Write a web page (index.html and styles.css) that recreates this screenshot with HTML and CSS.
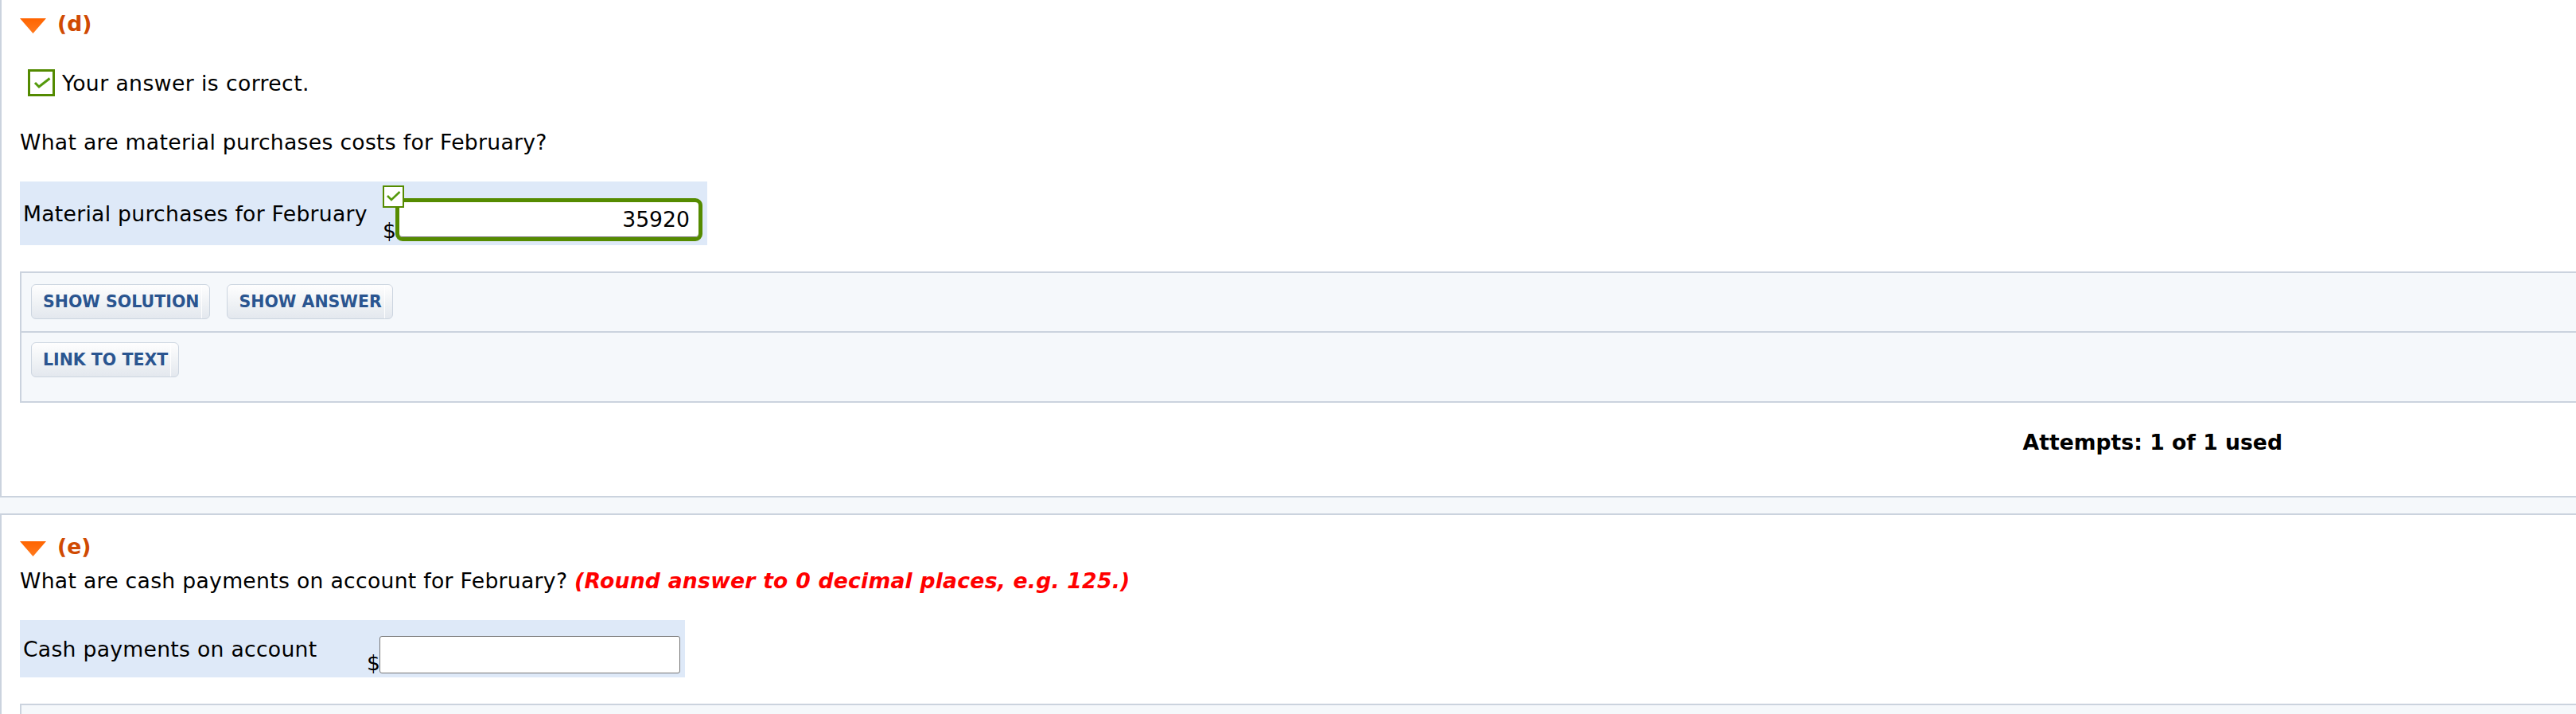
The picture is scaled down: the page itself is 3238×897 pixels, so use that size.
FILE: index.html
```html
<!DOCTYPE html>
<html lang="en">
<head>
<meta charset="utf-8">
<title>Question parts</title>
<link rel="stylesheet" href="styles.css">
</head>
<body>
<section class="part part-first">
  <div class="part-head">
    <svg class="caret" width="33" height="19" viewBox="0 0 33 19"><defs><linearGradient id="cg1" x1="0" y1="0" x2="0" y2="1"><stop offset="0" stop-color="#ff6400"/><stop offset="1" stop-color="#ff7a1e"/></linearGradient></defs><polygon points="0,0 33,0 16.5,19" fill="url(#cg1)"/></svg>
    <span class="part-label">(d)</span>
  </div>
  <div class="status">
    <span class="check-big"><svg width="28" height="28" viewBox="0 0 28 28"><path d="M6 14 L11 19 L24.5 8.5" fill="none" stroke="#559a0c" stroke-width="3"/></svg></span>
    <span>Your answer is correct.</span>
  </div>
  <p class="question">What are material purchases costs for February?</p>
  <div class="answer-box">
    <div class="answer-label label-d">Material purchases for February</div>
    <div class="answer-cell cell-d">
      <span class="check-small"><svg width="23" height="24" viewBox="0 0 23 24"><path d="M4 11 L9 16 L19.5 6" fill="none" stroke="#559a0c" stroke-width="2.6"/></svg></span>
      <span class="currency">$</span>
      <div class="field field-correct">35920</div>
    </div>
  </div>
  <div class="tools">
    <div class="tool-row">
      <button class="btn">SHOW SOLUTION</button>
      <button class="btn">SHOW ANSWER</button>
    </div>
    <div class="tool-row">
      <button class="btn">LINK TO TEXT</button>
    </div>
  </div>
  <div class="attempts">Attempts: 1 of 1 used</div>
</section>
<section class="part part-second">
  <div class="part-head">
    <svg class="caret" width="33" height="19" viewBox="0 0 33 19"><defs><linearGradient id="cg2" x1="0" y1="0" x2="0" y2="1"><stop offset="0" stop-color="#ff6400"/><stop offset="1" stop-color="#ff7a1e"/></linearGradient></defs><polygon points="0,0 33,0 16.5,19" fill="url(#cg2)"/></svg>
    <span class="part-label">(e)</span>
  </div>
  <p class="question question-e">What are cash payments on account for February? <span class="hint">(Round answer to 0 decimal places, e.g. 125.)</span></p>
  <div class="answer-box">
    <div class="answer-label label-e">Cash payments on account</div>
    <div class="answer-cell cell-e">
      <span class="currency">$</span>
      <div class="field field-empty"></div>
    </div>
  </div>
  <div class="tools tools-empty"></div>
</section>
</body>
</html>
```
FILE: styles.css
```css
* { box-sizing: border-box; }

html, body {
  overflow: hidden;
}

body {
  margin: 0;
  background: #f5f8fb;
  font-family: "DejaVu Sans", Verdana, sans-serif;
  font-size: 26.67px;
  color: #000;
}

.part {
  background: #fff;
  border: 2px solid #cbd3de;
  border-right: 0;
  padding-left: 23px;
}

.part-first {
  border-top: 0;
  padding-top: 10px;
  padding-bottom: 51px;
}

.part-second {
  margin-top: 20px;
  padding-top: 20px;
  padding-bottom: 40px;
}

.part-head {
  display: flex;
  align-items: center;
  height: 40px;
}

.caret {
  display: block;
  margin-top: 5px;
  margin-right: 14px;
}

.part-label {
  font-weight: bold;
  color: #d04a02;
  line-height: 40px;
}

.status {
  display: flex;
  align-items: center;
  gap: 9px;
  height: 34px;
  margin-top: 37px;
  margin-left: 10px;
  letter-spacing: 0.4px;
}

.check-big {
  display: flex;
  width: 34px;
  height: 34px;
  border: 3px solid #538a00;
  background: #fff;
}

.question {
  margin: 42px 0 0;
  line-height: 32px;
  letter-spacing: 0.28px;
}

.question-e {
  margin-top: 7px;
}

.hint {
  color: #f00;
  font-weight: bold;
  font-style: italic;
  letter-spacing: 0.22px;
}

.answer-box {
  display: flex;
  width: fit-content;
  margin-top: 33px;
  padding: 0 6px 5px 4px;
  background: #dee9f8;
}

.answer-label {
  align-self: center;
  margin-top: 6px;
  line-height: 32px;
  letter-spacing: 0.26px;
}

.label-d { width: 452px; }
.label-e { width: 432px; }

.answer-cell {
  position: relative;
  display: flex;
  align-items: flex-end;
}

.cell-d { padding-top: 21px; }
.cell-e { padding-top: 20px; }

.currency {
  width: 16px;
  line-height: 26px;
}

.field {
  background: #fff;
}

.field-correct {
  width: 386px;
  height: 54px;
  border: 5px solid #558b00;
  border-radius: 9px;
  padding-right: 11px;
  text-align: right;
  line-height: 43px;
  box-shadow: inset 0 -1px 0 #7d7d7d;
}

.field-empty {
  width: 378px;
  height: 47px;
  border: 1px solid #767676;
  border-radius: 3px;
}

.check-small {
  position: absolute;
  left: 0;
  top: 5px;
  width: 27px;
  height: 28px;
  border: 2px solid #558b00;
  background: #fff;
  display: flex;
}

.tools {
  margin-top: 33px;
  border: 2px solid #cbd3de;
  border-right: 0;
  background: #f5f8fb;
}

.tools-empty {
  height: 80px;
}

.tool-row {
  display: flex;
  gap: 21px;
  padding: 14px 12px 15px;
}

.tool-row + .tool-row {
  border-top: 2px solid #cbd3de;
  padding-top: 12px;
  padding-bottom: 30px;
}

.btn {
  position: relative;
  height: 44px;
  padding: 0 13px 0 14px;
  font-family: "DejaVu Sans", Verdana, sans-serif;
  font-size: 20.5px;
  font-weight: bold;
  color: #2a5590;
  border: 1px solid #ccd5e0;
  border-radius: 6px;
  background: linear-gradient(#fefefe, #e3e8ee);
}

.btn::after {
  content: "";
  position: absolute;
  top: 0;
  bottom: 0;
  right: 9px;
  width: 1px;
  background: rgba(255, 255, 255, 0.9);
}

.attempts {
  margin-top: 34px;
  line-height: 32px;
  font-weight: bold;
  text-align: right;
  padding-right: 369px;
}
```
